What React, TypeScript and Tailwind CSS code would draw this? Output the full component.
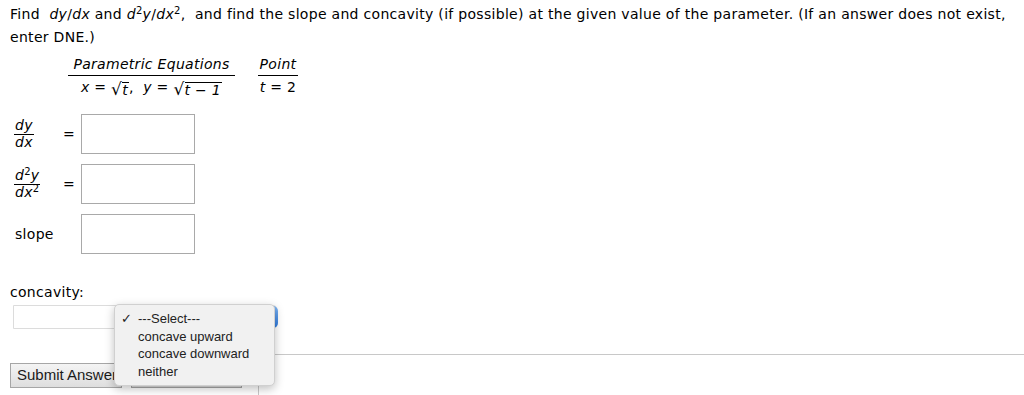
import React from 'react';

const font = { fontFamily: '"DejaVu Sans", Verdana, sans-serif' };

const Frac: React.FC<{ top: React.ReactNode; bottom: React.ReactNode }> = ({ top, bottom }) => (
    <span className="inline-flex flex-col items-center italic leading-[15px]">
        <span className="border-b border-black px-[1px] pb-[1px]">{top}</span>
        <span className="px-[1px]">{bottom}</span>
    </span>
);

const Root: React.FC<{ children: React.ReactNode }> = ({ children }) => (
    <span className="inline-flex items-end">
        <span className="text-[17px] leading-[17px] not-italic">√</span>
        <span className="border-t border-black italic leading-[15px] pr-[1px]">{children}</span>
    </span>
);

const Sup: React.FC<{ children: React.ReactNode }> = ({ children }) => (
    <sup className="text-[10px] leading-none not-italic">{children}</sup>
);

const AnswerBox: React.FC = () => (
    <div className="w-[114px] h-[40px] border border-[#a9a9a9] bg-white" />
);

export default function App() {
    return (
        <div className="relative w-[1024px] h-[395px] bg-white text-black text-[14px] tracking-[0.3px] overflow-hidden" style={font}>
            <div className="px-[10px] pt-[3px] leading-[23px]">
                <p>
                    Find&nbsp; <i>dy</i>/<i>dx</i> and <i>d</i><Sup>2</Sup><i>y</i>/<i>dx</i><Sup>2</Sup>,&nbsp; and find the slope and concavity (if possible) at the given value of the parameter. (If an answer does not exist, enter DNE.)
                </p>
            </div>

            <div className="flex ml-[68px] mt-[6px] gap-[23px]">
                <div className="flex flex-col items-center w-[167px]">
                    <div className="italic border-b border-black w-full text-center pb-[2px] leading-[18px]">Parametric Equations</div>
                    <div className="flex items-end mt-[4px] h-[18px] whitespace-pre">
                        <i>x</i> = <Root>t</Root>,  <i>y</i> = <Root>t − 1</Root>
                    </div>
                </div>
                <div className="flex flex-col items-center w-[40px]">
                    <div className="italic border-b border-black w-full text-center pb-[2px] leading-[18px]">Point</div>
                    <div className="mt-[4px] h-[18px] flex items-end"><span><i>t</i> = 2</span></div>
                </div>
            </div>

            <div className="flex flex-col gap-[10px] mt-[16px] ml-[14px]">
                <div className="flex items-center">
                    <div className="w-[40px] flex"><Frac top="dy" bottom="dx" /></div>
                    <div className="w-[27px] pl-[9px]">=</div>
                    <AnswerBox />
                </div>
                <div className="flex items-center">
                    <div className="w-[40px] flex">
                        <Frac top={<>d<Sup>2</Sup>y</>} bottom={<>dx<Sup>2</Sup></>} />
                    </div>
                    <div className="w-[27px] pl-[9px]">=</div>
                    <AnswerBox />
                </div>
                <div className="flex items-center">
                    <div className="w-[67px] pl-[1px]">slope</div>
                    <AnswerBox />
                </div>
            </div>

            <div className="px-[10px] mt-[29px] leading-[18px]">concavity:</div>
            <div className="ml-[13px] mt-[4px] w-[264px] h-[24px] border border-[#dcdcdc] rounded-r-[4px] bg-white relative">
                <div className="absolute right-[-2px] top-0 bottom-0 w-[8px] rounded-r-[5px] bg-gradient-to-b from-[#7db4f2] to-[#2a78dc]" />
            </div>

            <div className="flex items-start mt-[34px] pl-[10px] relative">
                <button
                    className="w-[112px] h-[25px] pl-[6px] text-left border border-[#a6a6a6] bg-gradient-to-b from-[#f4f4f4] to-[#dedede] text-[15px] text-[#1a1a1a] tracking-normal whitespace-nowrap overflow-hidden"
                    style={{ fontFamily: '"Liberation Sans", Arial, sans-serif' }}
                >
                    Submit Answer
                </button>
                <div className="ml-[9px] w-[111px] h-[25px] border border-[#a6a6a6] bg-[#dedede]" />
                <div className="ml-[16px] -mt-[9px] flex-1 border-t border-l border-[#c8c8c8] h-[60px]" />
            </div>

            <div
                className="absolute left-[114px] top-[304px] w-[161px] h-[82px] rounded-[5px] bg-[#f1f1f1] border border-[#d0d0d0] shadow-[0_3px_10px_rgba(0,0,0,0.25)] pt-[5px] text-[13px] text-[#222] leading-[17.7px] tracking-normal"
                style={{ fontFamily: '"Liberation Sans", Helvetica, Arial, sans-serif' }}
            >
                <div className="flex"><span className="w-[23px] pl-[6px]">✓</span>---Select---</div>
                <div className="pl-[23px]">concave upward</div>
                <div className="pl-[23px]">concave downward</div>
                <div className="pl-[23px]">neither</div>
            </div>
        </div>
    );
}
